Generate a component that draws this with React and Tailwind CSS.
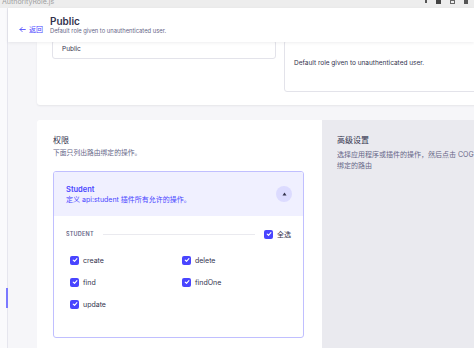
import React from "react";

const font = {fontFamily: 'Inter, "Noto Sans CJK SC", sans-serif'};

function Check({label}) {
    return (
        <div className="flex items-center gap-[4px] h-[10px]">
            <span className="w-[9px] h-[9px] rounded-[2px] bg-[#4945ff] flex items-center justify-center">
                <svg width="6" height="6" viewBox="0 0 10 10" fill="none">
                    <path d="M2 5.2 L4.2 7.4 L8.2 2.8" stroke="white" strokeWidth="1.8" strokeLinecap="round" strokeLinejoin="round"/>
                </svg>
            </span>
            {label && <span className="text-[7px] text-[#32324d] leading-none">{label}</span>}
        </div>
    )
}

export default function App() {
    return (
        <div className="w-[474px] h-[348px] overflow-hidden bg-[#f6f6f9] flex flex-col" style={font}>
            {/* browser strip */}
            <div className="h-[8px] shrink-0 bg-[#ededed] flex items-end justify-between overflow-hidden">
                <span className="text-[7px] leading-[7px] text-[#a0a0a0] pl-[2px] -mt-[2px] self-start">AuthorityRole.js</span>
                <div className="flex items-start gap-[9px] pr-[6px] self-start">
                    <span className="w-[2px] h-[3px] bg-[#555]"/>
                    <span className="w-[5px] h-[4px] bg-[#444]"/>
                    <span className="w-[5px] h-[4px] border border-[#666]"/>
                    <span className="w-[4px] h-[4px] bg-[#555]"/>
                </div>
            </div>

            <div className="flex flex-1 min-h-0">
                {/* left nav edge */}
                <div className="w-[8px] shrink-0 bg-[#fafafc] border-r border-[#e6e6ee] flex flex-col items-end">
                    <div className="h-[280px] shrink-0"/>
                    <div className="w-[2px] h-[20px] bg-[#7b79ff] -mr-[1px]"/>
                </div>

                <div className="flex-1 flex flex-col min-w-0">
                    {/* header */}
                    <div className="relative z-10 h-[34px] shrink-0 bg-white shadow-[0_1px_3px_rgba(33,33,52,0.08)] flex items-center pl-[11px]">
                        <div className="flex items-center gap-[3px] text-[#4945ff] mt-[9px]">
                            <svg width="7" height="7" viewBox="0 0 10 10" fill="none">
                                <path d="M9 5 H1.5 M4.5 2 L1.5 5 L4.5 8" stroke="#4945ff" strokeWidth="1.2" strokeLinecap="round" strokeLinejoin="round"/>
                            </svg>
                            <span className="text-[7px] leading-none">返回</span>
                        </div>
                        <div className="ml-[7px] flex flex-col">
                            <span className="text-[10px] font-semibold text-[#32324d] leading-[12px]">Public</span>
                            <span className="text-[5.8px] text-[#666687] leading-[8px]">Default role given to unauthenticated user.</span>
                        </div>
                    </div>

                    <div className="pl-[29px] flex flex-col">
                        {/* role details card */}
                        <div className="w-[480px] h-[63px] bg-white rounded-bl-[3px] shadow-[0_1px_2px_rgba(33,33,52,0.08)] flex gap-[8px] pl-[15px]">
                            <div className="w-[224px] h-[19px] border border-[#e3e3ea] rounded-[3px] flex items-center pl-[9px] -mt-[2px]">
                                <span className="text-[6.5px] text-[#32324d]">Public</span>
                            </div>
                            <div className="w-[200px] h-[52px] border border-[#e3e3ea] rounded-[3px] pl-[9px] pt-[6px] -mt-[2px]">
                                <span className="text-[6.5px] text-[#32324d]">Default role given to unauthenticated user.</span>
                            </div>
                        </div>

                        {/* permissions card */}
                        <div className="mt-[15px] w-[500px] h-[240px] bg-white rounded-[3px] flex">
                            <div className="w-[285px] shrink-0 pl-[16px] pt-[14px] flex flex-col">
                                <span className="text-[8px] text-[#32324d] leading-[12px]">权限</span>
                                <span className="text-[6.8px] text-[#666687] leading-[10px] mt-[2px]">下面只列出路由绑定的操作。</span>

                                <div className="mt-[13px] w-[251px] h-[167px] border border-[#c0bfff] rounded-[3px] flex flex-col overflow-hidden">
                                    <div className="h-[44px] bg-[#f0f0ff] flex items-center justify-between pl-[12px] pr-[11px]">
                                        <div className="flex flex-col mt-[2px]">
                                            <span className="text-[7.5px] font-semibold text-[#4945ff] leading-[10px]">Student</span>
                                            <span className="text-[7px] text-[#4945ff] leading-[10px]">定义 api:student 插件所有允许的操作。</span>
                                        </div>
                                        <div className="w-[16px] h-[16px] rounded-full bg-[#dcdbff] flex items-center justify-center">
                                            <svg width="5" height="4" viewBox="0 0 10 8">
                                                <path d="M5 1 L9 7 H1 Z" fill="#32324d"/>
                                            </svg>
                                        </div>
                                    </div>

                                    <div className="flex items-center pl-[12px] pr-[12px] mt-[13px]">
                                        <span className="text-[5.5px] font-semibold text-[#666687] tracking-[0.2px]">STUDENT</span>
                                        <div className="flex-1 h-px bg-[#eaeaef] mx-[9px]"/>
                                        <Check label="全选"/>
                                    </div>

                                    <div className="grid grid-cols-2 pl-[16px] mt-[16px] gap-y-[12px] w-[240px]">
                                        <Check label="create"/>
                                        <Check label="delete"/>
                                        <Check label="find"/>
                                        <Check label="findOne"/>
                                        <Check label="update"/>
                                    </div>
                                </div>
                            </div>

                            <div className="flex-1 bg-[#eaeaef] pl-[15px] pt-[14px] pr-[15px] flex flex-col">
                                <span className="text-[8px] text-[#32324d] leading-[12px]">高级设置</span>
                                <span className="text-[7px] text-[#666687] leading-[11px] mt-[3px] w-[178px]">选择应用程序或插件的操作，然后点击 COG 图标以显示绑定的路由</span>
                            </div>
                        </div>
                    </div>
                </div>
            </div>
        </div>
    )
}
